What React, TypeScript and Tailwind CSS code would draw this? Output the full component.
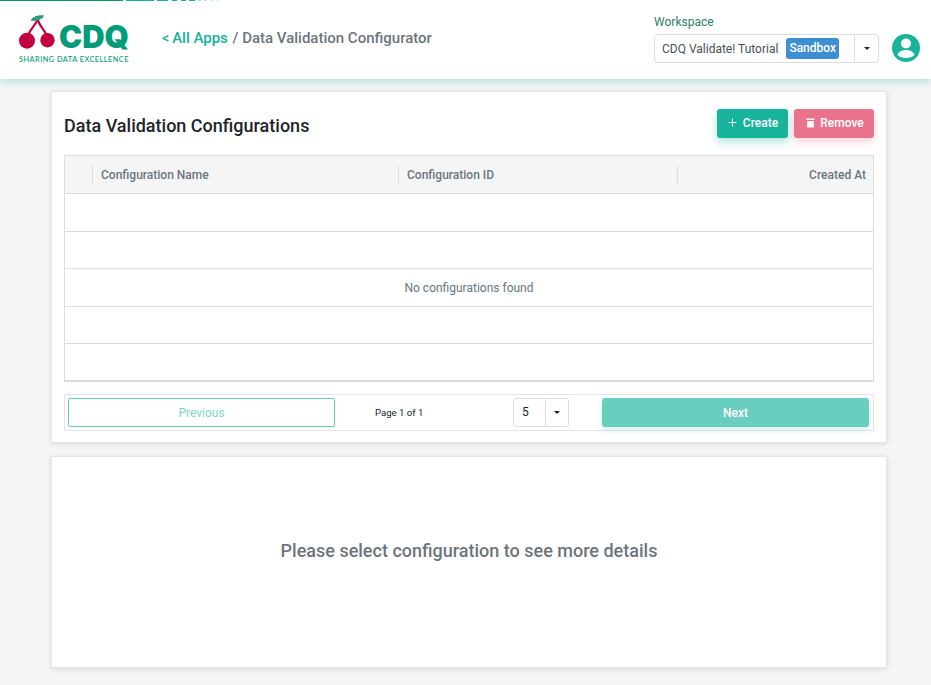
import React from "react";

function Caret() {
  return <span className="block w-0 h-0 border-x-[3.5px] border-x-transparent border-t-[3.5px] border-t-[#212529]" />;
}

function Logo() {
  return (
    <div className="flex flex-col w-[111px] mt-[15px] ml-[19px]">
      <div className="flex items-end h-[36px]">
        <svg width="38" height="36" viewBox="0 0 38 36" className="shrink-0">
          <path d="M18.7 5 C16 10 12 14 9 20" fill="none" stroke="#c4003f" strokeWidth="2.2" />
          <path d="M18.7 5 C21 11 25 15 27.7 20" fill="none" stroke="#c4003f" strokeWidth="2.2" />
          <circle cx="8" cy="25.7" r="8" fill="#c4003f" />
          <circle cx="28.5" cy="25.2" r="7.2" fill="#c4003f" />
          <path d="M11.5 5.5 C13 2 19 -0.5 25 0.5 C24 4 18 7 11.5 5.5Z" fill="#2e9e78" />
        </svg>
        <span className="ml-[2px] font-['Inter',sans-serif] font-black text-[31px] leading-[30px] tracking-[0px] text-[#009b77] h-[29px]">CDQ</span>
      </div>
      <span className="mt-[4px] whitespace-nowrap font-['Lato',sans-serif] font-medium text-[7.3px] leading-[9px] tracking-[0.5px] text-[#009b77]">SHARING DATA EXCELLENCE</span>
    </div>
  );
}

function Row({ children, last }: { children?: React.ReactNode; last?: boolean }) {
  return (
    <div className={"flex items-center justify-center h-[37.5px] pt-[2px] text-[12px] text-[#6c757d] " + (last ? "" : "border-b border-[#dcdcdc]")}>
      {children}
    </div>
  );
}

export default function App() {
  return (
    <div className="relative min-h-[685px] bg-[#f5f5f5] font-['Roboto',sans-serif] overflow-hidden">
      <div className="absolute top-0 left-0 flex h-[1px] gap-[3px] z-10">
        <span className="w-[123px] bg-[#009b77]" />
        <span className="w-[28px] bg-[#18b39b]" />
        <span className="w-[11px] bg-[#18b39b]" />
        <span className="w-[5px] ml-[1px] bg-[#18b39b]" />
        <span className="w-[5px] ml-[1px] bg-[#18b39b]" />
        <span className="w-[6px] bg-[#18b39b]" />
        <span className="w-[3px] bg-[#a8dfd5]" />
        <span className="w-[3px] bg-[#bce6de]" />
        <span className="w-[3px] bg-[#cfece7]" />
        <span className="w-[3px] bg-[#dff2ee]" />
      </div>

      <header className="flex h-[79px] bg-white shadow-[0_2px_8px_rgba(24,179,155,0.35)]">
        <Logo />
        <div className="ml-[32px] mt-[28px] flex items-baseline h-[20px] text-[15px] font-medium leading-[20px] whitespace-nowrap">
          <span className="text-[#18b39b]">
            <span className="mr-[3px] text-[14px]">&lt;</span>All Apps
          </span>
          <span className="ml-[1px] text-[#6c757d]">&nbsp;/ Data Validation Configurator</span>
        </div>
        <div className="ml-auto flex">
          <div className="flex flex-col mt-[15px]">
            <span className="text-[12px] leading-[15px] text-[#2f7d6b]">Workspace</span>
            <div className="mt-[4px] flex w-[225px] h-[29px] bg-white border border-[#dcdcdc] rounded-[4px]">
              <div className="flex-1 flex items-center pl-[7px] text-[12px] text-[#495057] whitespace-nowrap">
                <span>CDQ Validate! Tutorial</span>
                <span className="ml-[8px] px-[3px] h-[21px] leading-[21px] rounded-[3px] bg-[#3d8fd1] text-white font-medium">Sandbox</span>
              </div>
              <div className="w-[24px] flex items-center justify-center border-l border-[#dcdcdc]">
                <Caret />
              </div>
            </div>
          </div>
          <svg width="28" height="28" viewBox="0 0 28 28" className="ml-[13px] mr-[11px] mt-[34px]">
            <circle cx="14" cy="14" r="14" fill="#18b39b" />
            <circle cx="14" cy="9.5" r="5" fill="white" />
            <path d="M5.5 21 C6.5 17.5 10 16 14 16 C18 16 21.5 17.5 22.5 21 C20.5 23 17.5 24 14 24 C10.5 24 7.5 23 5.5 21Z" fill="white" />
          </svg>
        </div>
      </header>

      <main className="flex flex-col gap-[13px] ml-[51px] w-[836px] mt-[12px]">
        <section className="h-[352px] bg-white border border-[#e5e5e5] rounded-[2px] shadow-[0_1px_5px_rgba(0,0,0,0.12)] px-[12px]">
          <div className="flex items-center justify-between h-[63px]">
            <h1 className="text-[18px] font-medium text-[#212529] mt-[3px]">Data Validation Configurations</h1>
            <div className="flex gap-[6px]">
              <button className="flex items-center justify-center w-[71px] h-[29px] pb-[2px] pl-[1px] rounded-[3px] bg-[#18b39b] text-white text-[12px] font-medium shadow-[0_4px_8px_rgba(24,179,155,0.35)]">
                <svg width="9" height="9" viewBox="0 0 9 9" className="mr-[6px]">
                  <path d="M4.5 0.5V8.5M0.5 4.5H8.5" stroke="white" strokeWidth="1" />
                </svg>
                Create
              </button>
              <button className="flex items-center justify-center w-[80px] h-[29px] pb-[2px] pl-[2px] rounded-[3px] bg-[#e8738a] text-white text-[12px] font-medium shadow-[0_4px_8px_rgba(232,115,138,0.3)]">
                <svg width="9" height="10" viewBox="0 0 9 10" className="mr-[5px]">
                  <path d="M0.5 0.5H8.5V2H0.5Z M1.2 3H7.8V9.5H1.2Z" fill="white" />
                </svg>
                Remove
              </button>
            </div>
          </div>

          <div className="h-[227px] border border-[#dcdcdc] border-b-2">
            <div className="flex items-center h-[38px] bg-[#f5f5f5] border-b border-[#dcdcdc] text-[12px] font-medium text-[#6c757d]">
              <div className="w-[27px]" />
              <div className="w-[306px] h-[18px] leading-[18px] pl-[8px] border-l border-[#dcdcdc]">Configuration Name</div>
              <div className="w-[279px] h-[18px] leading-[18px] pl-[8px] border-l border-[#dcdcdc]">Configuration ID</div>
              <div className="flex-1 h-[18px] leading-[18px] pr-[7px] text-right border-l border-[#dcdcdc]">Created At</div>
            </div>
            <Row />
            <Row />
            <Row>No configurations found</Row>
            <Row />
            <Row last />
          </div>

          <div className="flex items-center h-[37px] mt-[12px] border border-[#e5e5e5] px-[3px] text-[12px]">
            <div className="flex items-center justify-center w-[267px] h-[29px] rounded-[2px] border border-solid border-[#66ccbc] text-[#7fd6c8] bg-white">Previous</div>
            <span className="ml-[40px] w-[138px] pt-[1px] text-[9.6px] text-[#212529]">Page 1 of 1</span>
            <div className="flex w-[56px] h-[29px] border border-[#dcdcdc] rounded-[3px]">
              <span className="w-[31px] pl-[8px] leading-[27px] text-[#212529]">5</span>
              <span className="flex-1 flex items-center justify-center border-l border-[#dcdcdc]">
                <Caret />
              </span>
            </div>
            <button className="ml-[33px] w-[267px] h-[29px] rounded-[3px] bg-[#69cdbf] text-white font-medium shadow-[0_3px_6px_rgba(24,179,155,0.2)]">Next</button>
          </div>
        </section>

        <section className="flex items-center justify-center h-[212px] bg-white border border-[#e5e5e5] rounded-[2px] shadow-[0_1px_5px_rgba(0,0,0,0.12)]">
          <span className="text-[18px] font-medium text-[#6c757d] -mt-[23px]">Please select configuration to see more details</span>
        </section>
      </main>
    </div>
  );
}
